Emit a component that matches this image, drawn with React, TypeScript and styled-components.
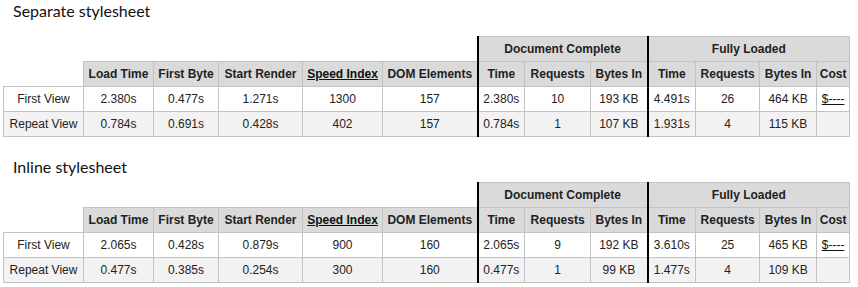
import React from "react";
import styled, { createGlobalStyle } from "styled-components";

const Global = createGlobalStyle`
  html, body { margin: 0; padding: 0; background: #fff; }
  body { font-family: "Liberation Sans", Arial, sans-serif; }
`;

const Page = styled.div`
  display: flex;
  flex-direction: column;
  padding: 1px 0 0 3px;
`;

const Section = styled.section<{ $top: number; $gap: number }>`
  display: flex;
  flex-direction: column;
  margin-top: ${(p) => p.$top}px;
  gap: ${(p) => p.$gap}px;
`;

const Heading = styled.h2`
  margin: 0 0 0 10px;
  font-family: Lato, "Open Sans", sans-serif;
  font-weight: 400;
  font-size: 16px;
  line-height: 20px;
  color: #111;
`;

const Table = styled.table`
  border-collapse: collapse;
  table-layout: fixed;
  width: 847px;
  font-family: "Liberation Sans", Arial, sans-serif;
  font-size: 12px;
  color: #222;
`;

const Blank = styled.th`
  border: none;
  background: #fff;
  padding: 0;
`;

const GroupHead = styled.th`
  height: 24px;
  padding: 0;
  background: #dadada;
  border: 1px solid #c3c3c3;
  border-left: 2px solid #000;
  font-weight: bold;
  text-align: center;
`;

const ColHead = styled.th<{ $split?: boolean }>`
  height: 24px;
  padding: 0;
  background: #dadada;
  border: 1px solid #c3c3c3;
  ${(p) => (p.$split ? "border-left: 2px solid #000;" : "")}
  font-weight: bold;
  text-align: center;
  white-space: nowrap;
`;

const HeadLink = styled.span`
  text-decoration: underline;
  color: #111;
`;

const Row = styled.tr<{ $alt?: boolean }>`
  background: ${(p) => (p.$alt ? "#f2f2f2" : "#fff")};
`;

const Cell = styled.td<{ $split?: boolean }>`
  height: 24px;
  padding: 0;
  border: 1px solid #c3c3c3;
  ${(p) => (p.$split ? "border-left: 2px solid #000;" : "")}
  text-align: center;
  white-space: nowrap;
`;

const CostLink = styled.span`
  text-decoration: underline;
  color: #111;
`;

const widths = [80, 70, 65, 84, 80, 95, 47, 66, 57, 48, 64, 57, 33];

type RowData = {
  label: string;
  values: string[];
  cost: boolean;
};

type TableData = {
  title: string;
  top: number;
  gap: number;
  rows: RowData[];
};

const data: TableData[] = [
  {
    title: "Separate stylesheet",
    top: 0,
    gap: 15,
    rows: [
      {
        label: "First View",
        values: ["2.380s", "0.477s", "1.271s", "1300", "157", "2.380s", "10", "193 KB", "4.491s", "26", "464 KB"],
        cost: true,
      },
      {
        label: "Repeat View",
        values: ["0.784s", "0.691s", "0.428s", "402", "157", "0.784s", "1", "107 KB", "1.931s", "4", "115 KB"],
        cost: false,
      },
    ],
  },
  {
    title: "Inline stylesheet",
    top: 20,
    gap: 5,
    rows: [
      {
        label: "First View",
        values: ["2.065s", "0.428s", "0.879s", "900", "160", "2.065s", "9", "192 KB", "3.610s", "25", "465 KB"],
        cost: true,
      },
      {
        label: "Repeat View",
        values: ["0.477s", "0.385s", "0.254s", "300", "160", "0.477s", "1", "99 KB", "1.477s", "4", "109 KB"],
        cost: false,
      },
    ],
  },
];

const heads = ["Load Time", "First Byte", "Start Render", "Speed Index", "DOM Elements", "Time", "Requests", "Bytes In", "Time", "Requests", "Bytes In", "Cost"];

const ResultTable: React.FC<{ rows: RowData[] }> = ({ rows }) => (
  <Table>
    <colgroup>
      {widths.map((w, i) => (
        <col key={i} style={{ width: w }} />
      ))}
    </colgroup>
    <thead>
      <tr>
        <Blank colSpan={6} />
        <GroupHead colSpan={3}>Document Complete</GroupHead>
        <GroupHead colSpan={4}>Fully Loaded</GroupHead>
      </tr>
      <tr>
        <Blank />
        {heads.map((h, i) => (
          <ColHead key={i} $split={i === 5 || i === 8}>
            {h === "Speed Index" ? <HeadLink>{h}</HeadLink> : h}
          </ColHead>
        ))}
      </tr>
    </thead>
    <tbody>
      {rows.map((r, ri) => (
        <Row key={ri} $alt={ri % 2 === 1}>
          <Cell>{r.label}</Cell>
          {r.values.map((v, i) => (
            <Cell key={i} $split={i === 5 || i === 8}>
              {v}
            </Cell>
          ))}
          <Cell>{r.cost ? <CostLink>$----</CostLink> : null}</Cell>
        </Row>
      ))}
    </tbody>
  </Table>
);

export default function App() {
  return (
    <>
      <Global />
      <Page>
        {data.map((t, i) => (
          <Section key={i} $top={t.top} $gap={t.gap}>
            <Heading>{t.title}</Heading>
            <ResultTable rows={t.rows} />
          </Section>
        ))}
      </Page>
    </>
  );
}
